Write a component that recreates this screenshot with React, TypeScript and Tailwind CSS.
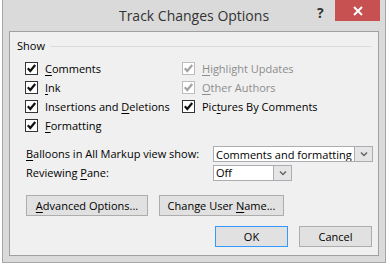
import React from "react";

const font = { fontFamily: '"Open Sans", "Noto Sans", sans-serif' };

function U({ children }: { children: React.ReactNode }) {
  return <span className="underline underline-offset-2">{children}</span>;
}

function Check({ disabled }: { disabled?: boolean }) {
  return (
    <div
      className={
        "flex h-[13px] w-[13px] shrink-0 items-center justify-center border bg-white " +
        (disabled ? "border-[#bcbcbc]" : "border-[#333333]")
      }
    >
      <svg width="11" height="11" viewBox="0 0 11 11">
        <path
          d="M1.8 5.3 L4.3 8 L9.2 2"
          fill="none"
          stroke={disabled ? "#a3a3a3" : "#111111"}
          strokeWidth={2.2}
        />
      </svg>
    </div>
  );
}

function Option({ label, disabled }: { label: React.ReactNode; disabled?: boolean }) {
  return (
    <div className="flex h-[19px] items-center gap-[7px] whitespace-nowrap">
      <Check disabled={disabled} />
      <span className={disabled ? "text-[#8d8d8d]" : "text-black"}>{label}</span>
    </div>
  );
}

function Select({ value, width }: { value: string; width: string }) {
  return (
    <div className={"flex h-[16px] shrink-0 items-stretch border border-[#abadb3] bg-white " + width}>
      <div className="flex flex-1 items-center overflow-hidden whitespace-nowrap pl-[2px] leading-none">{value}</div>
      <div className="flex w-[18px] items-center justify-center border-l border-[#abadb3] bg-[#e5e5e5]">
        <svg width="8" height="6" viewBox="0 0 8 6">
          <path d="M1 1.5 L4 4.5 L7 1.5" fill="none" stroke="#666" strokeWidth={1.5} />
        </svg>
      </div>
    </div>
  );
}

function Button({ children, focused, width }: { children: React.ReactNode; focused?: boolean; width: string }) {
  return (
    <div
      className={
        "flex h-[21px] items-center justify-center whitespace-nowrap border bg-[#e1e1e1] " +
        (focused ? "border-[#3399ff]" : "border-[#adadad]") +
        " " +
        width
      }
    >
      {children}
    </div>
  );
}

export default function App() {
  return (
    <div className="h-[267px] w-[390px] overflow-hidden bg-white text-[11px] leading-[14px] text-black" style={font}>
      <div className="ml-[2px] flex h-[263px] w-[384px] flex-col border border-t-0 border-[#a6a6a6] bg-[#dadada]">
        {/* title bar */}
        <div className="relative flex h-[31px] shrink-0 items-center justify-center">
          <span className="pt-[1px] text-[14px] leading-[18px] text-[#333333]">Track Changes Options</span>
          <span className="absolute left-[314px] top-[4px] text-[14px] font-bold leading-[18px] text-[#333]">?</span>
          <div className="absolute right-[5px] top-0 flex h-[21px] w-[45px] items-center justify-center bg-[#c75050]">
            <svg width="10" height="10" viewBox="0 0 10 10">
              <path d="M1 1 L9 9 M9 1 L1 9" stroke="white" strokeWidth={2} />
            </svg>
          </div>
        </div>

        {/* client area */}
        <div className="mx-[6px] mb-[6px] flex flex-1 flex-col border border-[#a0a0a0] bg-[#f0f0f0] pl-[15px] pr-[6px]">
          <div className="-ml-[8px] mt-[7px] flex h-[14px] items-center gap-[5px]">
            <span>Show</span>
            <div className="h-px flex-1 bg-[#dcdcdc]" />
          </div>

          <div className="mt-[6px] flex">
            <div className="flex w-[157px] flex-col">
              <Option label={<><U>C</U>omments</>} />
              <Option label={<><U>I</U>nk</>} />
              <Option label={<>Insertions and <U>D</U>eletions</>} />
              <Option label={<><U>F</U>ormatting</>} />
            </div>
            <div className="flex flex-col">
              <Option disabled label={<><U>H</U>ighlight Updates</>} />
              <Option disabled label={<><U>O</U>ther Authors</>} />
              <Option label={<>Pic<U>t</U>ures By Comments</>} />
            </div>
          </div>

          <div className="mt-[11px] flex h-[16px] items-center">
            <span className="ml-[1px] w-[187px] shrink-0 whitespace-nowrap">
              <U>B</U>alloons in All Markup view show:
            </span>
            <Select value="Comments and formatting" width="w-[160px]" />
          </div>
          <div className="mt-[2px] flex h-[17px] items-center">
            <span className="ml-[1px] w-[187px] shrink-0 whitespace-nowrap">
              Reviewing <U>P</U>ane:
            </span>
            <Select value="Off" width="w-[79px]" />
          </div>

          <div className="mt-[14px] flex gap-[11px] pl-[1px]">
            <Button width="w-[122px]">
              <span><U>A</U>dvanced Options...</span>
            </Button>
            <Button width="w-[125px]">
              <span>Change User <U>N</U>ame...</span>
            </Button>
          </div>

          <div className="mt-[10px] flex justify-end gap-[11px]">
            <Button focused width="w-[73px]">OK</Button>
            <Button width="w-[73px]">Cancel</Button>
          </div>
        </div>
      </div>
    </div>
  );
}
